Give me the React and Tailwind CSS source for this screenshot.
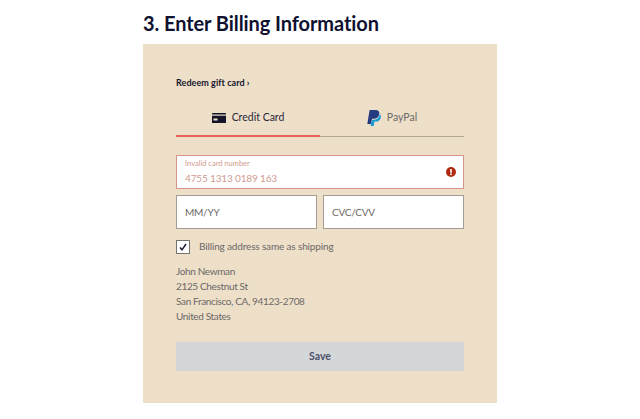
import React from 'react';

const font = "font-['Lato','Noto_Sans',sans-serif]";

const CardIcon = () => (
  <svg width="14" height="10" viewBox="0 0 14 10">
    <rect width="14" height="10" rx="0.5" fill="#14142b" />
    <rect x="0" y="1.5" width="14" height="1.2" fill="#eedfc9" />
    <rect x="1.5" y="5.5" width="4" height="2" fill="#eedfc9" />
  </svg>
);

const PayPalIcon = () => (
  <svg width="14" height="16" viewBox="0 0 14 16">
    <path d="M2.600 0H8c3 0 4.800 1.400 4.200 4.200C11.600 7.400 9.400 8.800 6.800 8.800H5L4.100 14H0.300Z" fill="#253b80" />
    <path d="M12.700 4.100C13.800 5 14.100 6.300 13.700 7.900 13.100 10.300 11.200 11.500 8.900 11.500H7.400L6.700 16H3.600L4.300 12.600 5.500 9.800H7.300C10 9.800 12.100 8.100 12.700 4.100Z" fill="#179bd7" />
  </svg>
);

const Field = ({ placeholder }) => (
  <div className="flex-1 h-[34px] bg-white border border-[#a39c93] flex items-center pl-2 text-[10px] tracking-[-0.25px] text-[#6c6967]">
    {placeholder}
  </div>
);

const App = () => {
  return (
    <div className={`w-[640px] h-[419px] bg-white overflow-hidden ${font}`}>
      <div className="w-[354px] mx-auto">
        <h2 className="h-[44px] pt-[10px] text-[20px] leading-[26px] font-bold tracking-[-0.08px] text-[#0f1130] whitespace-nowrap">
          3. Enter Billing Information
        </h2>
        <div className="h-[359px] bg-[#eedfc9] px-[33px] pt-[33px]">
          <p className="text-[9px] leading-[12px] font-bold tracking-[0.05px] text-[#14142b]">Redeem gift card ›</p>

          <div className="flex mt-[10px] h-[38px]">
            <div className="flex-1 border-b-2 border-[#ef5f5a] flex items-center justify-center gap-[6px] pt-[1px] text-[10.500px] text-[#27273a]">
              <CardIcon />
              Credit Card
            </div>
            <div className="flex-1 border-b border-[#b5a797] flex items-center justify-center gap-[6px] pt-[1px] text-[10.500px] text-[#6c6967]">
              <PayPalIcon />
              PayPal
            </div>
          </div>

          <div className="mt-[18px] h-[34px] bg-white border border-[#d8938a] flex items-center justify-between pl-2 pr-[7px]">
            <div>
              <p className="text-[7.500px] leading-[10px] text-[#d09a90]">Invalid card number</p>
              <p className="text-[10px] leading-[14px] mt-[2px] tracking-[-0.15px] text-[#d09a90]">4755 1313 0189 163</p>
            </div>
            <svg width="10" height="10" viewBox="0 0 10 10">
              <circle cx="5" cy="5" r="5" fill="#b02a10" />
              <rect x="4.200" y="2" width="1.600" height="3.800" fill="#fff" />
              <rect x="4.200" y="6.500" width="1.600" height="1.600" fill="#fff" />
            </svg>
          </div>

          <div className="flex gap-[6px] mt-[6px]">
            <Field placeholder="MM/YY" />
            <Field placeholder="CVC/CVV" />
          </div>

          <div className="flex items-center gap-[9px] mt-[10px]">
            <div className="w-[14px] h-[14px] bg-white border border-[#77736f] flex items-center justify-center">
              <svg width="8" height="8" viewBox="0 0 8 8">
                <path d="M1 4.500L3 6.800L7 1" fill="none" stroke="#14142b" strokeWidth="1.400" />
              </svg>
            </div>
            <span className="text-[10px] tracking-[-0.15px] text-[#6c6967]">Billing address same as shipping</span>
          </div>

          <div className="mt-[10px] text-[10px] leading-[15px] tracking-[-0.35px] text-[#6c6967]">
            <p>John Newman</p>
            <p>2125 Chestnut St</p>
            <p>San Francisco, CA, 94123-2708</p>
            <p>United States</p>
          </div>

          <button className="mt-[18px] w-full h-[29px] bg-[#d4d7da] text-[10.500px] font-bold text-[#4b5068]">
            Save
          </button>
        </div>
      </div>
    </div>
  );
};

export default App;
